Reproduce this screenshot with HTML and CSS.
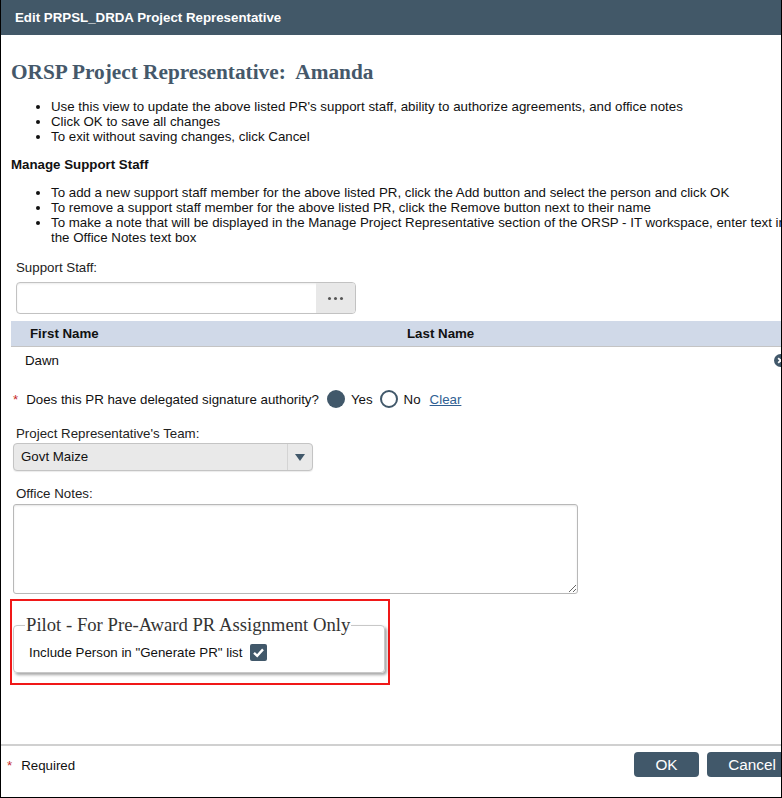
FILE: index.html
```html
<!DOCTYPE html>
<html>
<head>
<meta charset="utf-8">
<link rel="stylesheet" href="styles.css">
</head>
<body>
<div class="dialog">
  <div class="titlebar">Edit PRPSL_DRDA Project Representative</div>
  <div class="body">
    <h1 class="title">ORSP Project Representative:&nbsp; Amanda</h1>
    <ul class="bullets first">
      <li>Use this view to update the above listed PR's support staff, ability to authorize agreements, and office notes</li>
      <li>Click OK to save all changes</li>
      <li>To exit without saving changes, click Cancel</li>
    </ul>
    <h2 class="section">Manage Support Staff</h2>
    <ul class="bullets second">
      <li>To add a new support staff member for the above listed PR, click the Add button and select the person and click OK</li>
      <li>To remove a support staff member for the above listed PR, click the Remove button next to their name</li>
      <li>To make a note that will be displayed in the Manage Project Representative section of the ORSP - IT workspace, enter text in<br>the Office Notes text box</li>
    </ul>
    <div class="label staff-label">Support Staff:</div>
    <div class="lookup">
      <div class="lookup-field"></div>
      <div class="lookup-btn"><span class="dot"></span><span class="dot"></span><span class="dot"></span></div>
    </div>
    <div class="grid">
      <div class="grid-head">
        <div class="hc first-col">First Name</div>
        <div class="hc">Last Name</div>
        <div class="hc"></div>
      </div>
      <div class="grid-row">
        <div class="rc first-col">Dawn</div>
        <div class="rc"></div>
        <div class="rc icon-cell">
          <svg width="13" height="13" viewBox="0 0 13 13"><circle cx="6.5" cy="6.5" r="6.5" fill="#41586a"/><path d="M4.2 4.2 L8.8 8.8 M8.8 4.2 L4.2 8.8" stroke="#fff" stroke-width="1.8"/></svg>
        </div>
      </div>
    </div>
    <div class="question">
      <span class="req">*</span>
      <span class="q-text">Does this PR have delegated signature authority?</span>
      <span class="radio on"></span><span class="opt">Yes</span>
      <span class="radio off"></span><span class="opt">No</span>
      <a class="clear" href="#">Clear</a>
    </div>
    <div class="label team-label">Project Representative's Team:</div>
    <div class="select">
      <div class="select-value">Govt Maize</div>
      <div class="select-arrow"><svg width="10" height="7" viewBox="0 0 10 7"><path d="M0 0 H10 L5 7 Z" fill="#41586a"/></svg></div>
    </div>
    <div class="label notes-label">Office Notes:</div>
    <textarea class="notes"></textarea>
    <div class="highlight">
      <fieldset class="pilot">
        <legend>Pilot - For Pre-Award PR Assignment Only</legend>
        <div class="pilot-row">
          <span>Include Person in "Generate PR" list</span>
          <span class="check"><svg width="17" height="17" viewBox="0 0 17 17"><path d="M4 8.8 L7.2 11.8 L13 5.4" fill="none" stroke="#fff" stroke-width="2.4"/></svg></span>
        </div>
      </fieldset>
    </div>
  </div>
  <div class="footer">
    <div class="required"><span class="req">*</span>Required</div>
    <div class="buttons">
      <button class="btn ok">OK</button>
      <button class="btn cancel">Cancel</button>
    </div>
  </div>
</div>
</body>
</html>
```

FILE: styles.css
```css
html, body {
  margin: 0;
  padding: 0;
  background: #fff;
}
body {
  font-family: "Liberation Sans", Arial, sans-serif;
  font-size: 13.3px;
  color: #111;
}
.dialog {
  width: 782px;
  height: 798px;
  box-sizing: border-box;
  border-left: 1px solid #000;
  border-right: 1px solid #000;
  border-bottom: 1px solid #000;
  display: flex;
  flex-direction: column;
  overflow: hidden;
}
.titlebar {
  height: 35px;
  flex: none;
  background: #425868;
  color: #fff;
  font-weight: bold;
  font-size: 13.3px;
  line-height: 35px;
  padding-left: 14px;
}
.body {
  flex: 1;
  padding: 25px 0 0 10px;
  position: relative;
}
.title {
  margin: 0;
  font-family: "Liberation Serif", "Times New Roman", serif;
  font-size: 21.3px;
  line-height: 24px;
  font-weight: bold;
  color: #45586a;
}
.bullets {
  margin: 0;
  padding-left: 40px;
  line-height: 15px;
  white-space: nowrap;
}
.bullets.first { margin-top: 15px; }
.bullets.second { margin-top: 13px; }
.section {
  margin: 13px 0 0 0;
  font-size: 13.3px;
  line-height: 15px;
  font-weight: bold;
}
.label {
  line-height: 15px;
  margin-left: 5px;
  color: #222;
}
.staff-label { margin-top: 15px; }
.lookup {
  margin: 7px 0 0 5px;
  width: 340px;
  height: 32px;
  box-sizing: border-box;
  border: 1px solid #c2c2c2;
  border-radius: 4px;
  display: flex;
  overflow: hidden;
  box-shadow: inset 0 1px 2px rgba(0,0,0,0.08);
}
.lookup-field { flex: 1; }
.lookup-btn {
  width: 39px;
  background: #e8e8e8;
  display: flex;
  align-items: center;
  justify-content: center;
  gap: 3px;
}
.dot {
  width: 3px;
  height: 3px;
  border-radius: 50%;
  background: #555;
}
.grid {
  margin-top: 7px;
  width: 800px;
}
.grid-head {
  display: grid;
  grid-template-columns: 396px 367px 37px;
  height: 25px;
  background: #d0d9e8;
  border-bottom: 1px solid #c4c4c4;
  font-weight: bold;
  line-height: 25px;
}
.hc.first-col { padding-left: 19px; }
.grid-row {
  display: grid;
  grid-template-columns: 396px 367px 37px;
  height: 26px;
  align-items: center;
}
.rc.first-col { padding-left: 14px; }
.icon-cell { display: flex; align-items: center; }
.icon-cell svg { display: block; }
.question {
  margin-top: 16px;
  height: 20px;
  display: flex;
  align-items: center;
  color: #111;
}
.req {
  color: #c62828;
  margin: 0 8px 0 2px;
}
.q-text { margin-right: 8px; }
.radio {
  width: 18px;
  height: 18px;
  border-radius: 50%;
  box-sizing: border-box;
  display: inline-block;
}
.radio.on { background: #41586a; }
.radio.off { border: 2px solid #41586a; background: #fff; }
.opt { margin: 0 7px 0 6px; }
.clear {
  color: #2f5f93;
  text-decoration: underline;
  margin-left: 2px;
}
.team-label { margin-top: 17px; }
.select {
  margin: 2px 0 0 2px;
  width: 300px;
  height: 28px;
  box-sizing: border-box;
  background: #e9e9e9;
  border: 1px solid #c4c4c4;
  border-radius: 4px;
  display: flex;
  box-shadow: 0 1px 1px rgba(0,0,0,0.08);
}
.select-value {
  flex: 1;
  line-height: 26px;
  padding-left: 7px;
  color: #111;
}
.select-arrow {
  width: 24px;
  border-left: 1px solid #d4d4d4;
  display: flex;
  align-items: center;
  justify-content: center;
}
.select-arrow svg { display: block; }
.notes-label { margin-top: 15px; }
.notes {
  display: block;
  margin: 3px 0 0 2px;
  width: 565px;
  height: 90px;
  box-sizing: border-box;
  border: 1px solid #b8b8b8;
  border-radius: 3px;
  box-shadow: inset 0 1px 2px rgba(0,0,0,0.1);
  font-family: inherit;
}
.highlight {
  margin: 5px 0 0 -1px;
  width: 380px;
  height: 86px;
  box-sizing: border-box;
  border: 2px solid #f01818;
  padding: 13px 0 0 1px;
}
.pilot {
  margin: 0;
  width: 372px;
  box-sizing: border-box;
  border: 1px solid #c8c8c8;
  border-radius: 4px;
  box-shadow: 2px 2px 3px rgba(0,0,0,0.35);
  padding: 8px 12px 11px 11px;
}
.pilot legend {
  font-family: "Liberation Serif", "Times New Roman", serif;
  font-size: 18.7px;
  line-height: 22px;
  color: #333;
  padding: 0 1px;
}
.pilot-row {
  display: flex;
  align-items: center;
  height: 17px;
  margin-left: 4px;
  color: #111;
}
.check {
  margin-left: 8px;
  width: 17px;
  height: 17px;
  background: #41586a;
  border-radius: 2px;
}
.check svg { display: block; }
.footer {
  flex: none;
  height: 51px;
  border-top: 2px solid #d0d0d0;
  display: flex;
  justify-content: space-between;
  align-items: flex-start;
  position: relative;
}
.required {
  margin-top: 12px;
  margin-left: 4px;
  line-height: 15px;
}
.required .req { margin: 0 9px 0 2px; }
.buttons {
  display: flex;
  gap: 8px;
  margin-top: 6px;
  margin-right: -16px;
}
.btn {
  height: 25px;
  border: none;
  border-radius: 4px;
  background: #41586a;
  color: #fff;
  font-family: "Liberation Sans", Arial, sans-serif;
  font-size: 15.3px;
  padding: 0;
}
.btn.ok { width: 65px; }
.btn.cancel { width: 90px; }
```
